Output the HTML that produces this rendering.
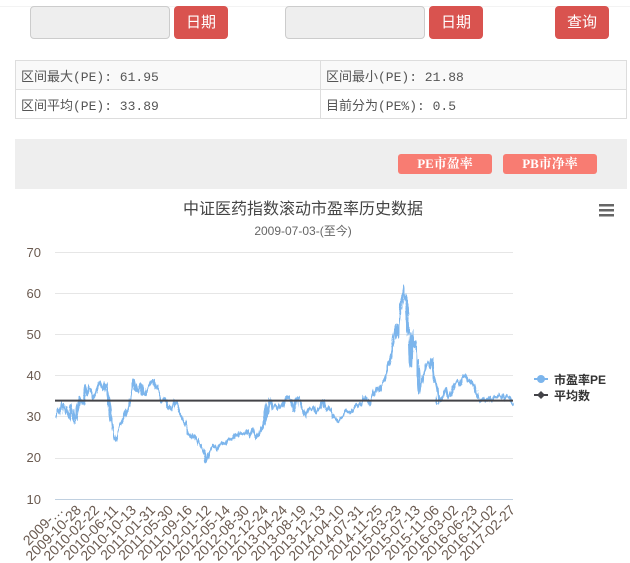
<!DOCTYPE html><html><head><meta charset="utf-8"><style>
body{margin:0;width:630px;height:563px;overflow:hidden;background:#fff;font-family:"Liberation Sans","Noto Sans CJK SC",sans-serif;position:relative}
.a{position:absolute}
.inp{background:#eee;border:1px solid #ccc;border-radius:4px;height:31px;top:6px}
.btn{background:#d9534f;color:#fff;border-radius:4px;height:33px;top:6px;font-size:15px;text-align:center;line-height:33px}
table{position:absolute;left:15px;top:60px;width:612px;border-collapse:collapse;font-family:"Liberation Mono","Noto Sans CJK SC",monospace;font-size:13px;color:#555}
td{border:1px solid #ddd;height:28px;padding:0 5px}
.pb{background:#f87c72;color:#fff;font-family:"Liberation Serif","Noto Serif CJK SC",serif;font-size:13px;font-weight:bold;text-align:center;line-height:20px;height:20px;border-radius:3px;top:154px;width:94px}
</style></head><body>
<div class="a" style="left:0;top:0;width:630px;height:6px;border-bottom:1px solid #f3f3f3"></div>
<div class="a inp" style="left:30px;width:138px"></div>
<div class="a btn" style="left:174px;width:54px">日期</div>
<div class="a inp" style="left:285px;width:138px"></div>
<div class="a btn" style="left:429px;width:54px">日期</div>
<div class="a btn" style="left:555px;width:54px">查询</div>
<table><tr style="background:#f9f9f9"><td style="width:294px">区间最大(PE): 61.95</td><td>区间最小(PE): 21.88</td></tr>
<tr><td>区间平均(PE): 33.89</td><td>目前分为(PE%):  0.5</td></tr></table>
<div class="a" style="left:15px;top:139px;width:612px;height:50px;background:#eee"></div>
<div class="a pb" style="left:398px">PE市盈率</div>
<div class="a pb" style="left:503px">PB市净率</div>
<svg class="a" style="left:0;top:190px" width="630" height="373" viewBox="0 190 630 373">
<defs><filter id="j" x="-5%" y="-10%" width="110%" height="120%"><feTurbulence type="fractalNoise" baseFrequency="0.35 0.05" numOctaves="2" seed="3"/><feDisplacementMap in="SourceGraphic" scale="7" xChannelSelector="R" yChannelSelector="G"/></filter></defs>
<text x="303" y="214" font-size="16" fill="#444" text-anchor="middle">中证医药指数滚动市盈率历史数据</text>
<text x="303" y="235" font-size="12" fill="#666" text-anchor="middle">2009-07-03-(至今)</text>
<g fill="#666"><rect x="599" y="204" width="15" height="2.5"/><rect x="599" y="209" width="15" height="2.5"/><rect x="599" y="214" width="15" height="2.5"/></g>
<g stroke="#e6e6e6"><line x1="55" x2="513" y1="252.5" y2="252.5"/><line x1="55" x2="513" y1="293.5" y2="293.5"/><line x1="55" x2="513" y1="334.5" y2="334.5"/><line x1="55" x2="513" y1="375.5" y2="375.5"/><line x1="55" x2="513" y1="416.5" y2="416.5"/><line x1="55" x2="513" y1="458.5" y2="458.5"/></g>
<line x1="55" x2="513" y1="499.5" y2="499.5" stroke="#c0d0e0"/>
<g font-size="13" fill="#6a5a50" text-anchor="end"><text x="41" y="257">70</text><text x="41" y="298">60</text><text x="41" y="339">50</text><text x="41" y="380">40</text><text x="41" y="421">30</text><text x="41" y="462">20</text><text x="41" y="504">10</text></g>
<polyline filter="url(#j)" fill="none" stroke="#7cb5ec" stroke-width="2.4" stroke-linejoin="round" points="55,418 58,410 60,414 62,404 65,412 67,406 70,419 72,405 75,422 77,410 80,398 83,404 86,392 88,384 91,392 94,398 97,388 100,382 103,390 106,384 108,398 110,410 112,426 114,438 116,442 118,432 121,424 124,418 127,410 130,402 132,392 134,380 136,390 138,392 141,384 144,394 147,388 150,384 153,380 156,388 159,394 162,402 165,398 168,404 171,410 174,400 177,404 180,414 183,420 186,426 189,432 192,438 195,436 198,442 201,448 204,454 206,462 208,456 211,450 214,446 217,452 220,446 223,442 226,444 229,438 232,440 235,434 238,436 241,432 244,434 247,430 250,436 253,428 256,438 259,434 262,428 265,420 268,404 270,398 273,410 276,406 279,410 282,404 285,400 288,396 291,402 294,412 296,400 299,396 302,404 305,416 308,408 311,410 314,406 317,412 320,408 323,400 326,410 329,406 332,412 335,418 338,422 341,418 344,414 347,410 350,412 353,408 356,404 359,406 362,402 364,396 367,400 370,404 373,396 376,388 379,392 382,384 385,380 388,370 390,360 392,350 394,338 396,326 398,338 400,312 402,300 404,286 406,300 408,328 410,340 411,366 412,330 414,348 416,342 418,370 420,394 422,380 424,372 426,364 428,362 430,368 432,358 434,378 436,390 438,404 440,396 442,400 444,392 446,388 448,398 450,396 452,392 454,386 456,382 458,380 460,384 462,378 464,376 466,376 468,382 470,380 472,386 474,386 476,394 478,398 480,402 483,398 486,402 489,398 492,400 495,396 498,398 501,394 504,400 507,396 510,398 513,404"/>
<line x1="55" x2="513" y1="400.6" y2="400.6" stroke="#434348" stroke-width="2"/>
<g font-size="14" fill="#6a5a50" text-anchor="end">
<text transform="translate(64,511) rotate(-45)">2009-…</text>
<text transform="translate(82,511) rotate(-45)">2009-10-28</text>
<text transform="translate(100,511) rotate(-45)">2010-02-22</text>
<text transform="translate(119,511) rotate(-45)">2010-06-11</text>
<text transform="translate(137,511) rotate(-45)">2010-10-13</text>
<text transform="translate(156,511) rotate(-45)">2011-01-31</text>
<text transform="translate(174,511) rotate(-45)">2011-05-30</text>
<text transform="translate(193,511) rotate(-45)">2011-09-16</text>
<text transform="translate(212,511) rotate(-45)">2012-01-12</text>
<text transform="translate(231,511) rotate(-45)">2012-05-14</text>
<text transform="translate(250,511) rotate(-45)">2012-08-30</text>
<text transform="translate(269,511) rotate(-45)">2012-12-24</text>
<text transform="translate(288,511) rotate(-45)">2013-04-24</text>
<text transform="translate(307,511) rotate(-45)">2013-08-19</text>
<text transform="translate(326,511) rotate(-45)">2013-12-13</text>
<text transform="translate(345,511) rotate(-45)">2014-04-10</text>
<text transform="translate(364,511) rotate(-45)">2014-07-31</text>
<text transform="translate(383,511) rotate(-45)">2014-11-25</text>
<text transform="translate(402,511) rotate(-45)">2015-03-23</text>
<text transform="translate(421,511) rotate(-45)">2015-07-13</text>
<text transform="translate(440,511) rotate(-45)">2015-11-06</text>
<text transform="translate(459,511) rotate(-45)">2016-03-02</text>
<text transform="translate(478,511) rotate(-45)">2016-06-23</text>
<text transform="translate(497,511) rotate(-45)">2016-11-02</text>
<text transform="translate(516,511) rotate(-45)">2017-02-27</text>
</g>
<line x1="534" x2="548" y1="379" y2="379" stroke="#7cb5ec" stroke-width="2"/><circle cx="541" cy="379" r="4" fill="#7cb5ec"/>
<line x1="534" x2="548" y1="395" y2="395" stroke="#434348" stroke-width="2"/><path d="M541 391l4 4-4 4-4-4z" fill="#434348"/>
<g font-size="12" font-weight="bold" fill="#333"><text x="554" y="384">市盈率PE</text><text x="554" y="400">平均数</text></g>
</svg>
</body></html>
